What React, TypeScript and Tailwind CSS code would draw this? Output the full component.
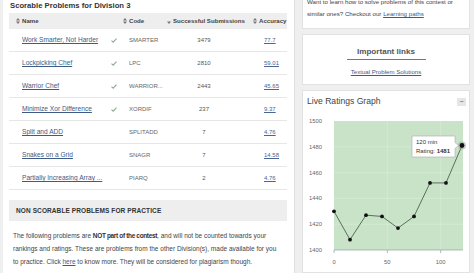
import React from 'react';

const problems = [
  { name: 'Work Smarter, Not Harder', solved: true, code: 'SMARTER', subs: '3479', acc: '77.7' },
  { name: 'Lockpicking Chef', solved: true, code: 'LPC', subs: '2810', acc: '59.01' },
  { name: 'Warrior Chef', solved: true, code: 'WARRIOR...', subs: '2443', acc: '45.65' },
  { name: 'Minimize Xor Difference', solved: true, code: 'XORDIF', subs: '237', acc: '9.37' },
  { name: 'Split and ADD', solved: false, code: 'SPLITADD', subs: '7', acc: '4.76' },
  { name: 'Snakes on a Grid', solved: false, code: 'SNAGR', subs: '7', acc: '14.58' },
  { name: 'Partially Increasing Array ...', solved: false, code: 'PIARQ', subs: '2', acc: '4.76' },
];

const ratings: [number, number][] = [
  [0, 1430], [15, 1408], [30, 1427], [45, 1426], [60, 1417],
  [75, 1426], [90, 1452], [105, 1452], [120, 1481],
];

const SortIcon = ({ down }: { down?: boolean }) => (
  <svg width="4" height="6" viewBox="0 0 4 6" className="shrink-0">
    {!down && <path d="M0 2.4 L2 0 L4 2.4 Z" fill="#777" />}
    <path d="M0 3.6 L2 6 L4 3.6 Z" fill="#777" />
  </svg>
);

const Check = () => (
  <svg width="6" height="5" viewBox="0 0 6 5">
    <path d="M0.5 2.6 L2.2 4.2 L5.5 0.6" fill="none" stroke="#8faa8f" strokeWidth="1.1" />
  </svg>
);

const xOf = (t: number) => 31 + t * (128 / 120);
const yOf = (r: number) => 138 - (r - 1400) * 1.29;

const RatingsChart = () => {
  const pts = ratings.map(([t, r]) => `${xOf(t)},${yOf(r)}`).join(' ');
  const last = ratings[ratings.length - 1];
  return (
    <svg width="168" height="160" viewBox="0 0 168 160" className="block">
      <rect x="31" y="9" width="129" height="129" fill="#c9e3c9" />
      {[1420, 1440, 1460, 1480].map((r) => (
        <line key={r} x1="31" x2="160" y1={yOf(r)} y2={yOf(r)} stroke="#ffffff" strokeOpacity="0.35" strokeWidth="0.6" />
      ))}
      {[50, 100].map((t) => (
        <line key={t} x1={xOf(t)} x2={xOf(t)} y1="9" y2="138" stroke="#ffffff" strokeOpacity="0.3" strokeWidth="0.6" />
      ))}
      <line x1="31" x2="160" y1="138" y2="138" stroke="#9aa" strokeWidth="0.8" />
      {[0, 50, 100].map((t) => (
        <line key={t} x1={xOf(t)} x2={xOf(t)} y1="138" y2="141" stroke="#9aa" strokeWidth="0.8" />
      ))}
      {[1500, 1480, 1460, 1440, 1420, 1400].map((r) => (
        <text key={r} x="19" y={yOf(r) + 2} fontSize="5.8" fill="#666" textAnchor="end" fontFamily="Liberation Sans, Arial, sans-serif">
          {r}
        </text>
      ))}
      {[0, 50, 100].map((t) => (
        <text key={t} x={xOf(t)} y="152" fontSize="5.8" fill="#666" textAnchor="middle" fontFamily="Liberation Sans, Arial, sans-serif">
          {t}
        </text>
      ))}
      <polyline points={pts} fill="none" stroke="#3f4f3f" strokeWidth="0.8" />
      {ratings.slice(0, -1).map(([t, r]) => (
        <circle key={t} cx={xOf(t)} cy={yOf(r)} r="1.9" fill="#111" />
      ))}
      <circle cx={xOf(last[0])} cy={yOf(last[1])} r="4" fill="#999" fillOpacity="0.5" />
      <circle cx={xOf(last[0])} cy={yOf(last[1])} r="2.4" fill="#111" />
      {/* tooltip */}
      <path d="M109 24 H152 V30.5 L155.5 33.5 L152 36.5 V45 H109 Z" fill="#fff" stroke="#aaa" strokeWidth="0.6" />
      <text x="113" y="32" fontSize="6" fill="#333" fontFamily="Liberation Sans, Arial, sans-serif">120 min</text>
      <text x="113" y="40.5" fontSize="6" fill="#333" fontFamily="Liberation Sans, Arial, sans-serif">
        Rating: <tspan fontWeight="bold">1481</tspan>
      </text>
    </svg>
  );
};

export default function App() {
  return (
    <div className="w-[474px] h-[273px] overflow-hidden bg-[#efefef] flex pl-[3px] gap-[7px] font-['Liberation_Sans',Arial,sans-serif]">
      {/* Left: problems */}
      <div className="w-[292px] h-full bg-white border-r border-[#e0e0e0] pl-[6px] pr-[7px] shrink-0">
        <div className="h-[13px] pl-[1px] text-[7.7px] font-bold text-[#333] leading-[12px]">
          Scorable Problems for Division 3
        </div>

        <div className="grid grid-cols-[98px_14px_42px_86px_39px] h-[16px] bg-[#eeeeee] items-center text-[6.1px] font-bold text-[#444]">
          <div className="flex items-center gap-[2px] pl-[7px]"><SortIcon /> Name</div>
          <div />
          <div className="flex items-center gap-[2px] pl-[2px]"><SortIcon /> Code</div>
          <div className="flex items-center gap-[2px] pl-[4px]"><SortIcon down /> Successful Submissions</div>
          <div className="flex items-center gap-[2px] pl-[4px]"><SortIcon /> Accuracy</div>
        </div>

        {problems.map((p) => (
          <div key={p.code} className="grid grid-cols-[98px_14px_42px_86px_39px] h-[23px] items-center border-b border-[#e6e6e6] text-[6.6px]">
            <div className="pl-[13px] text-[#3e5b86] underline whitespace-nowrap">{p.name}</div>
            <div className="flex justify-center">{p.solved && <Check />}</div>
            <div className="pl-[8px] text-[#666] whitespace-nowrap overflow-hidden text-[6px]">{p.code}</div>
            <div className="text-center pr-[4px] text-[#555] text-[6px]">{p.subs}</div>
            <div className="pl-[15px] text-[#4a6794] underline text-[6px]">{p.acc}</div>
          </div>
        ))}

        <div className="mt-[10px] h-[21px] bg-[#eeeeee] flex items-center pl-[7px] text-[6.5px] font-bold text-[#333] uppercase tracking-[0.1px]">
          Non scorable problems for practice
        </div>

        <p className="mt-[8px] pl-[4px] w-[279px] text-[6.5px] leading-[13px] text-[#444] whitespace-nowrap">
          The following problems are <b className="text-[#333] tracking-[-0.35px]">NOT part of the contest</b>, and will not be counted towards your
          <br />
          rankings and ratings. These are problems from the other Division(s), made available for you
          <br />
          to practice. Click <span className="underline text-[#3e5b86]">here</span> to know more. They will be considered for plagiarism though.
        </p>
      </div>

      {/* Right column */}
      <div className="w-[168px] flex flex-col gap-[5px] shrink-0">
        <div className="-mt-[11px] bg-white border border-[#e2e2e2] pl-[4px] pt-[6px] pb-[11px] text-[6.15px] leading-[12px] text-[#444] whitespace-nowrap overflow-hidden">
          <div>Want to learn how to solve problems of this contest or</div>
          <div>similar ones? Checkout our <span className="underline text-[#3e5b86]">Learning paths</span></div>
        </div>

        <div className="h-[57px] bg-white border border-[#e2e2e2] flex flex-col items-center pt-[12px]">
          <div className="w-[79px] text-center border-b border-[#777] pb-[2px] text-[8.1px] leading-[10px] font-bold text-[#555]">
            Important links
          </div>
          <div className="mt-[7px] text-[6.1px] leading-[10px] underline text-[#3e5b86]">Textual Problem Solutions</div>
        </div>

        <div className="flex-1 bg-white border border-[#e2e2e2]">
          <div className="h-[21px] flex items-center justify-between pl-[4px] pr-[3px]">
            <span className="text-[8.6px] text-[#444]">Live Ratings Graph</span>
            <span className="w-[9px] h-[8px] bg-[#e6e6e6] flex items-center justify-center text-[7px] leading-none text-[#555]">−</span>
          </div>
          <RatingsChart />
        </div>
      </div>
    </div>
  );
}
